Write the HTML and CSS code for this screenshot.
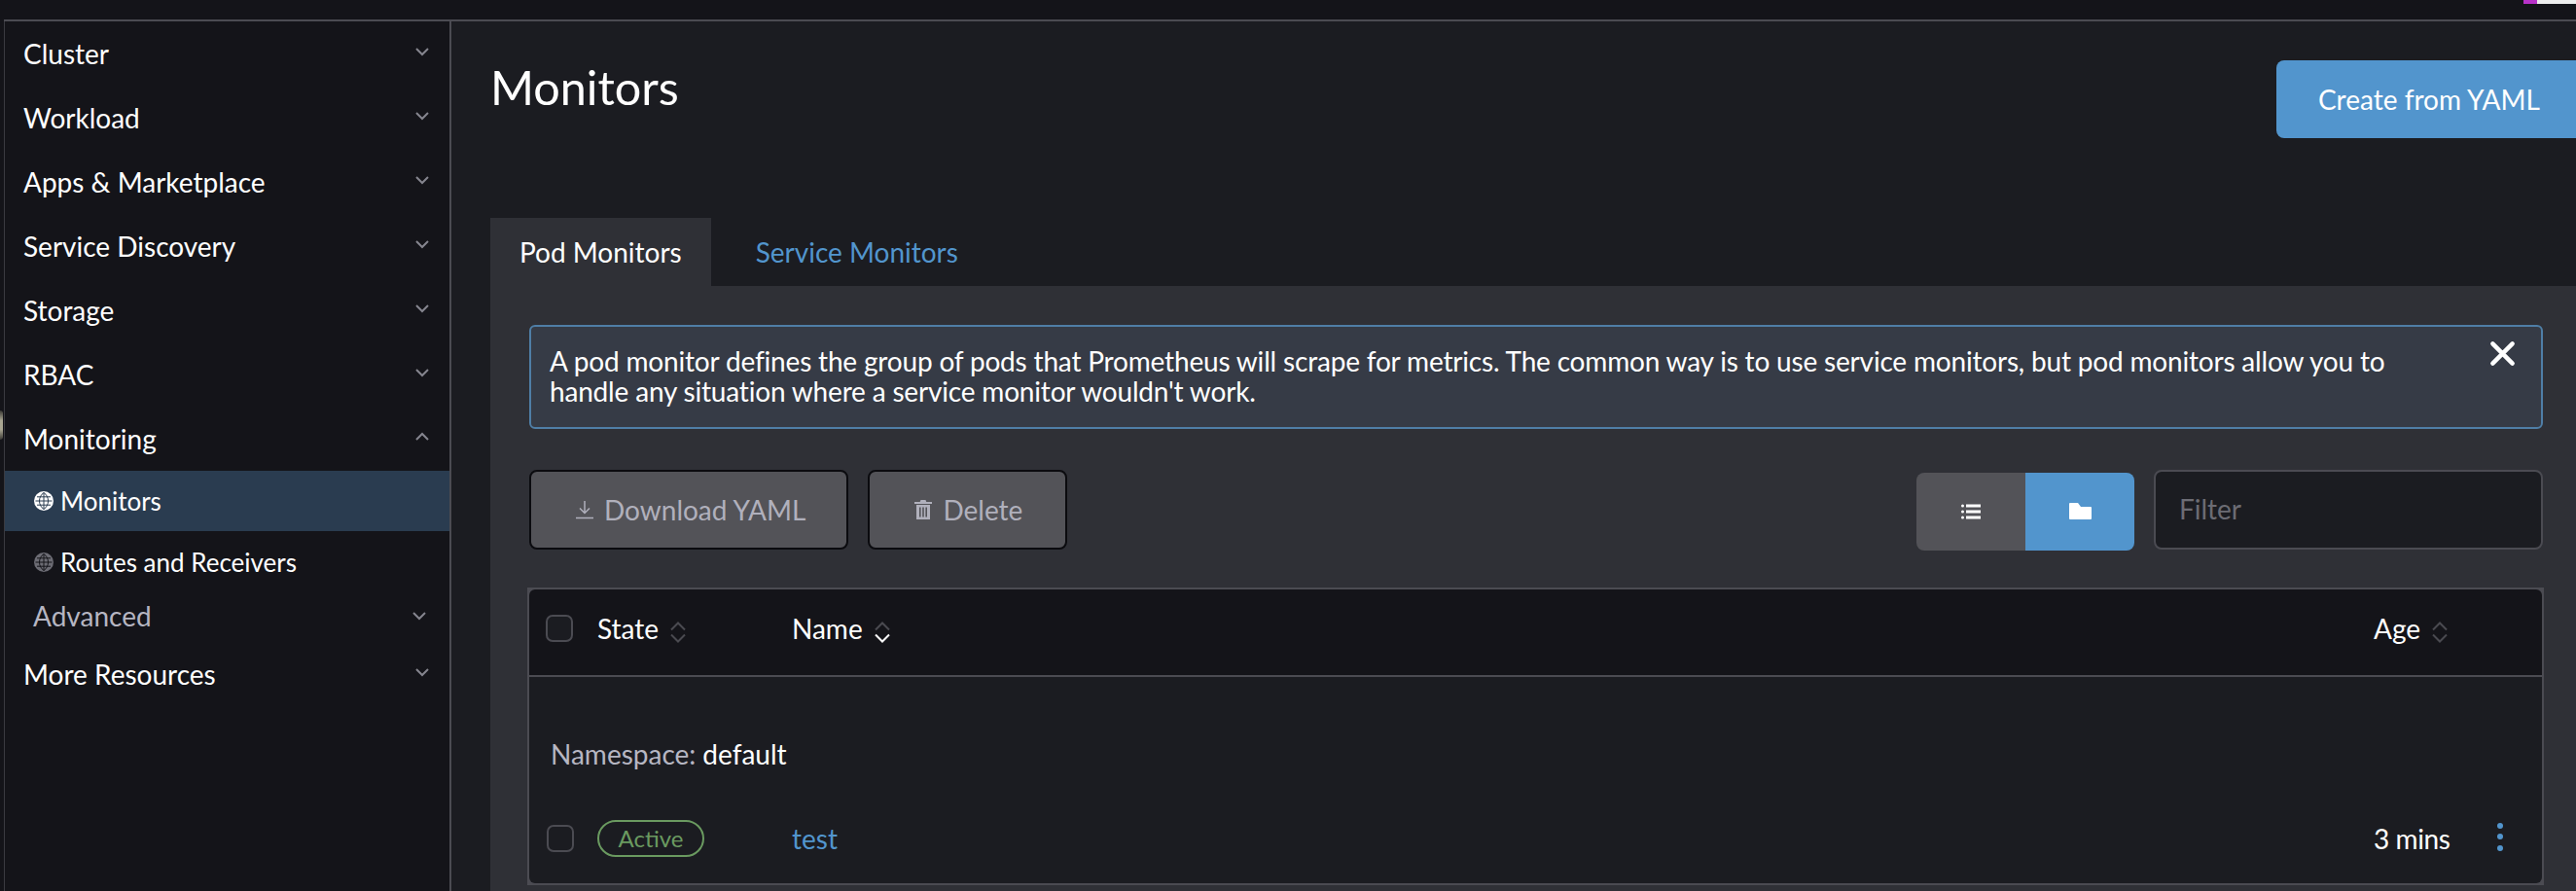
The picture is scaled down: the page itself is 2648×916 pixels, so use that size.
FILE: index.html
```html
<!DOCTYPE html>
<html>
<head>
    <title>Monitors</title>
    <link rel="stylesheet" href="styles.css">
</head>
<body>
<div class="edge-mark"></div>
<div class="topbar">
    <span class="logo-pink"></span>
    <span class="logo-white"></span>
</div>
<div class="shell">
    <nav class="sidebar">
        <div class="group"><span>Cluster</span><svg class="chev" viewBox="0 0 14 8"><path d="M1 1l6 6 6-6"/></svg></div>
        <div class="group"><span>Workload</span><svg class="chev" viewBox="0 0 14 8"><path d="M1 1l6 6 6-6"/></svg></div>
        <div class="group"><span>Apps &amp; Marketplace</span><svg class="chev" viewBox="0 0 14 8"><path d="M1 1l6 6 6-6"/></svg></div>
        <div class="group"><span>Service Discovery</span><svg class="chev" viewBox="0 0 14 8"><path d="M1 1l6 6 6-6"/></svg></div>
        <div class="group"><span>Storage</span><svg class="chev" viewBox="0 0 14 8"><path d="M1 1l6 6 6-6"/></svg></div>
        <div class="group"><span>RBAC</span><svg class="chev" viewBox="0 0 14 8"><path d="M1 1l6 6 6-6"/></svg></div>
        <div class="group"><span>Monitoring</span><svg class="chev" viewBox="0 0 14 8"><path d="M1 7l6-6 6 6"/></svg></div>
        <div class="child active">
            <svg class="globe" viewBox="0 0 20 20"><circle cx="10" cy="10" r="10"/><path d="M10 1.5v17M1.5 10h17M3 5.8h14M3 14.2h14M10 1.5c-6 4-6 13 0 17M10 1.5c6 4 6 13 0 17"/></svg>
            <span>Monitors</span>
        </div>
        <div class="child">
            <svg class="globe" viewBox="0 0 20 20"><circle cx="10" cy="10" r="10"/><path d="M10 1.5v17M1.5 10h17M3 5.8h14M3 14.2h14M10 1.5c-6 4-6 13 0 17M10 1.5c6 4 6 13 0 17"/></svg>
            <span>Routes and Receivers</span>
        </div>
        <div class="subgroup"><span>Advanced</span><svg class="chev" viewBox="0 0 14 8"><path d="M1 1l6 6 6-6"/></svg></div>
        <div class="group"><span>More Resources</span><svg class="chev" viewBox="0 0 14 8"><path d="M1 1l6 6 6-6"/></svg></div>
    </nav>
    <main class="main">
        <header class="page-head">
            <h1>Monitors</h1>
            <button class="btn-create">Create from YAML</button>
        </header>
        <div class="tabs">
            <div class="tab tab-on">Pod Monitors</div>
            <div class="tab">Service Monitors</div>
        </div>
        <section class="panel">
            <div class="banner">
                <p>A pod monitor defines the group of pods that Prometheus will scrape for metrics. The common way is to use service monitors, but pod monitors allow you to handle any situation where a service monitor wouldn't work.</p>
                <svg class="close" viewBox="0 0 24 24"><path d="M3 3l18 18M21 3L3 21"/></svg>
            </div>
            <div class="toolbar">
                <button class="btn-off">
                    <svg class="ico" viewBox="0 0 20 20"><path d="M10 1v12M5 8.500l5 5 5-5M1 18.500h18"/></svg>
                    Download YAML
                </button>
                <button class="btn-off btn-delete">
                    <svg class="ico-fill" viewBox="0 0 18 20"><path d="M6.500 0h5l.8 2H18v2H0V2h5.700zM2 5h14v15H2zM5 7.500v10h1.600v-10zM8.200 7.500v10h1.600v-10zM11.400 7.500v10H13v-10z" fill-rule="evenodd"/></svg>
                    Delete
                </button>
                <div class="spacer"></div>
                <div class="toggle">
                    <div class="toggle-item">
                        <svg class="ico-list" viewBox="0 0 20 16"><circle cx="1.500" cy="2" r="1.500"/><circle cx="1.500" cy="8" r="1.500"/><circle cx="1.500" cy="14" r="1.500"/><path d="M5 .5h15v3H5zM5 6.500h15v3H5zM5 12.500h15v3H5z"/></svg>
                    </div>
                    <div class="toggle-item toggle-on">
                        <svg class="ico-folder" viewBox="0 0 23 17"><path d="M0 1a1 1 0 0 1 1-1h8l3 4h10a1 1 0 0 1 1 1v11a1 1 0 0 1-1 1H1a1 1 0 0 1-1-1z"/></svg>
                    </div>
                </div>
                <div class="filter">Filter</div>
            </div>
            <div class="table">
                <div class="row head">
                    <span class="check"></span>
                    <span class="th">State <svg class="sort" viewBox="0 0 16 22"><path d="M1 8.500l7-7 7 7M1 13.500l7 7 7-7"/></svg></span>
                    <span class="th">Name <svg class="sort" viewBox="0 0 16 22"><path d="M1 8.500l7-7 7 7"/><path class="cur" d="M1 13.500l7 7 7-7"/></svg></span>
                    <span class="th">Age <svg class="sort" viewBox="0 0 16 22"><path d="M1 8.500l7-7 7 7M1 13.500l7 7 7-7"/></svg></span>
                    <span></span>
                </div>
                <div class="table-body">
                    <div class="ns-row"><span class="ns-label">Namespace:</span> default</div>
                    <div class="row item">
                        <span class="check"></span>
                        <span><span class="badge">Active</span></span>
                        <a class="link">test</a>
                        <span class="age">3 mins</span>
                        <span class="dots"><i></i><i></i><i></i></span>
                    </div>
                </div>
            </div>
        </section>
    </main>
</div>
</body>
</html>
```

FILE: styles.css
```css
* {
    box-sizing: border-box;
}
html, body {
    height: 100%;
}
body {
    margin: 0;
    overflow: hidden;
    background-color: #141419;
    color: #fff;
    font-family: Lato, 'Liberation Sans', sans-serif;
    font-size: 28px;
}
button {
    font-family: inherit;
    font-size: 28px;
}

/* bit of another window showing at the left edge */
.edge-mark {
    position: absolute;
    left: 0;
    top: 422px;
    width: 3px;
    height: 30px;
    border-radius: 0 3px 3px 0;
    background: linear-gradient(#3a3934, #a9a692 35%, #a9a692 65%, #3a3934);
}

/* top bar */
.topbar {
    display: flex;
    justify-content: flex-end;
    align-items: flex-start;
    height: 22px;
    margin-left: 4px;
    border-bottom: 2px solid #4b4b52;
}
.logo-pink {
    width: 14px;
    height: 4px;
    background-color: #b832c8;
}
.logo-white {
    width: 40px;
    height: 4px;
    background-color: #eeeeee;
}

.shell {
    display: flex;
    height: 894px;
    margin-left: 4px;
    border-left: 1px solid #3a3a40;
}

/* sidebar */
.sidebar {
    width: 459px;
    flex-shrink: 0;
    border-right: 2px solid #4b4b52;
}
.group, .subgroup {
    display: flex;
    justify-content: space-between;
    align-items: center;
    height: 66px;
    padding: 0 21px 0 19px;
}
.subgroup {
    height: 46px;
    margin-bottom: 4px;
    padding: 0 24px 0 29px;
    color: #b6b6c2;
}
.chev {
    width: 14px;
    height: 8px;
    margin-top: -5px;
    overflow: visible;
    fill: none;
    stroke: #85858e;
    stroke-width: 2;
}
.subgroup .chev {
    margin-top: 0;
}
.child {
    display: flex;
    align-items: center;
    gap: 7px;
    height: 62px;
    padding-left: 30px;
    font-size: 26px;
}
.child + .child {
    height: 64px;
}
.active {
    background-color: #2a3c50;
}
.globe {
    width: 20px;
    height: 20px;
    fill: #6c6c74;
}
.globe path {
    fill: none;
    stroke: #141419;
    stroke-width: 1;
}
.active .globe {
    fill: #fff;
}
.active .globe path {
    stroke: #2a3c50;
}

/* main area */
.main {
    flex: 1;
    min-width: 0;
    padding: 0 0 0 40px;
    background-color: #1b1c21;
}
.page-head {
    display: flex;
    justify-content: space-between;
    align-items: flex-start;
    height: 202px;
}
.page-head h1 {
    margin: 39px 0 0;
    font-size: 48.5px;
    font-weight: 400;
    line-height: 56px;
}
.btn-create {
    height: 80px;
    width: 308px;
    margin-top: 40px;
    padding: 0 0 0 43px;
    border: none;
    border-radius: 8px 0 0 8px;
    background-color: #5295cd;
    color: #fff;
    text-align: left;
}

.tabs {
    display: flex;
    height: 70px;
}
.tab {
    display: flex;
    align-items: center;
    padding: 0 30px;
    color: #5295cd;
    margin-left: 16px;
}
.tab-on {
    margin-left: 0;
    background-color: #2f3036;
    color: #fff;
}

.panel {
    height: 622px;
    padding: 40px 34px 0 40px;
    background-color: #2f3036;
}

.banner {
    display: flex;
    justify-content: space-between;
    height: 107px;
    padding: 20px 26px 0 19px;
    border: 2px solid #4f7ea6;
    border-radius: 6px;
    background-color: #363b46;
}
.banner p {
    margin: 0;
    width: 1960px;
    letter-spacing: -0.18px;
    line-height: 31px;
}
.close {
    width: 27px;
    height: 27px;
    margin-top: -6px;
    fill: none;
    stroke: #fff;
    stroke-width: 4;
    stroke-linecap: round;
}

.toolbar {
    display: flex;
    align-items: center;
    gap: 20px;
    height: 82px;
    margin-top: 42px;
}
.btn-off {
    display: flex;
    align-items: center;
    gap: 10px;
    height: 82px;
    padding: 0 42px 0 45px;
    border: 2px solid #0b0b0f;
    border-radius: 8px;
    background-color: #535358;
    color: #b0b0bc;
}
.btn-delete {
    gap: 11px;
    padding: 0 44px 0 46px;
}
.ico {
    width: 20px;
    height: 20px;
    fill: none;
    stroke: #b0b0bc;
    stroke-width: 1.500;
}
.ico-fill {
    width: 18px;
    height: 20px;
    fill: #b0b0bc;
}
.spacer {
    flex: 1;
}
.toggle {
    display: flex;
    height: 80px;
    overflow: hidden;
    border-radius: 8px;
    margin-top: 3px;
}
.toggle-item {
    display: flex;
    align-items: center;
    justify-content: center;
    width: 112px;
    background-color: #535358;
}
.toggle-on {
    background-color: #5295cd;
}
.ico-list {
    width: 20px;
    height: 16px;
    fill: #fff;
}
.ico-folder {
    width: 23px;
    height: 17px;
    fill: #fff;
}
.filter {
    width: 400px;
    height: 82px;
    padding: 0 24px;
    border: 2px solid #4b4b52;
    border-radius: 8px;
    background-color: #1b1c21;
    color: #6c6c74;
    line-height: 76px;
}

.table {
    height: 306px;
    margin: 39px -1px 0 -2px;
    border: 2px solid #4b4b52;
    background-color: #4b4b52;
}
.row {
    display: grid;
    grid-template-columns: 70px 200px 1626px 127px 1fr;
    align-items: center;
}
.head {
    height: 90px;
    padding-bottom: 8px;
    border-bottom: 2px solid #4b4b52;
    border-radius: 6px 6px 0 0;
    background-color: #141419;
}
.th {
    display: flex;
    align-items: center;
    gap: 12px;
}
.sort {
    width: 16px;
    height: 22px;
    margin-top: 8px;
    fill: none;
    stroke: #4a4a50;
    stroke-width: 2;
}
.cur {
    stroke: #fff;
}
.check {
    display: block;
    width: 28px;
    height: 28px;
    margin-left: 17px;
    border: 2px solid #4b4b52;
    border-radius: 7px;
    background-color: #1b1c21;
}
.table-body {
    height: 212px;
    border-radius: 0 0 6px 6px;
    background-color: #1b1c21;
}
.ns-row {
    display: flex;
    gap: 7px;
    height: 138px;
    padding: 62px 0 0 22px;
    line-height: 34px;
}
.ns-label {
    color: #b6b6c2;
}
.item {
    height: 56px;
}
.item .check {
    margin-left: 18px;
}
.badge {
    display: inline-block;
    width: 110px;
    height: 38px;
    border: 2px solid #6a9a60;
    border-radius: 19px;
    color: #6a9a60;
    font-size: 24px;
    line-height: 33px;
    text-align: center;
}
.link {
    color: #5295cd;
}
.age {
    letter-spacing: -0.4px;
}
.dots {
    display: flex;
    flex-direction: column;
    gap: 5.5px;
    margin-top: -4px;
}
.dots i {
    display: block;
    width: 6px;
    height: 6px;
    border-radius: 50%;
    background-color: #5295cd;
}
```
